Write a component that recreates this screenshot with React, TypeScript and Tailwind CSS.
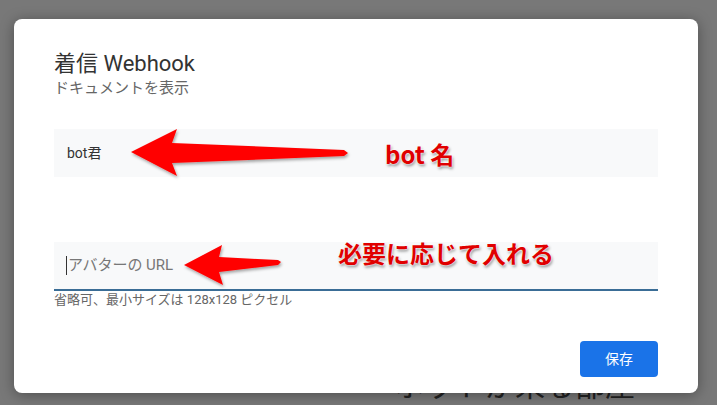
const jp = "font-['Roboto','Noto_Sans_CJK_JP',sans-serif]";

function Arrows() {
  return (
    <svg
      className="pointer-events-none absolute inset-0 z-20"
      width={717}
      height={405}
      viewBox="0 0 717 405"
    >
      <defs>
        <filter id="arrow-shadow" x="-10%" y="-30%" width="120%" height="160%">
          <feDropShadow dx="1" dy="2" stdDeviation="1.5" floodColor="#000" floodOpacity="0.35" />
        </filter>
      </defs>
      <g fill="#ff0000" filter="url(#arrow-shadow)">
        <polygon points="131,152 177,129 172,143 344,150 348,153 344,156 172,163 177,176" />
        <polygon points="184,265 222,245 219,257 278,260 281,262 278,265 219,272 223,285" />
      </g>
    </svg>
  );
}

function Label({ text, className }: { text: string; className: string }) {
  return (
    <span
      className={`absolute z-20 text-[24px] leading-none font-bold text-[#e00000] font-['Noto_Sans_CJK_JP',sans-serif] [text-shadow:0_0_2px_#fff,0_0_2px_#fff,1px_2px_3px_rgba(0,0,0,0.45)] ${className}`}
    >
      {text}
    </span>
  );
}

export default function App() {
  return (
    <div className={`relative h-[405px] w-[717px] overflow-hidden bg-[#787878] pl-[14px] pt-[19px] ${jp}`}>
      {/* page behind the dialog */}
      <div className="absolute left-[395px] top-[368px] text-[30px] leading-[36px] text-[#222]">
        ボットが来る部屋
      </div>

      <div className="relative z-10 flex h-[374px] w-[684px] flex-col rounded-lg bg-white px-10 pt-[31px] shadow-[0_2px_14px_rgba(0,0,0,0.35)]">
        <h2 className="text-[22px] leading-[28px] text-[#333]">着信 Webhook</h2>
        <p className="text-[15px] leading-5 text-[#666]">ドキュメントを表示</p>

        <div className="mt-[31px] flex h-12 items-center bg-[#f8f9fa] px-[13px] text-[14px] text-[#333]">
          bot君
        </div>

        <div className="mt-[65px] flex h-[49px] items-center border-b-2 border-[#3a6d96] bg-[#f8f9fa] pl-3 text-[15px] text-[#777]">
          <span className="mr-[1px] h-[19px] w-px bg-[#333]" />
          アバターの URL
        </div>
        <p className="mt-[1px] text-[13px] leading-4 text-[#666]">
          省略可、最小サイズは 128x128 ピクセル
        </p>

        <div className="mt-[33px] flex justify-end">
          <button
            type="button"
            className="h-9 w-[78px] rounded bg-[#1a73e8] text-[14px] text-white"
          >
            保存
          </button>
        </div>
      </div>

      <Arrows />
      <Label text="bot 名" className="left-[385px] top-[142px]" />
      <Label text="必要に応じて入れる" className="left-[338px] top-[241px]" />
    </div>
  );
}
